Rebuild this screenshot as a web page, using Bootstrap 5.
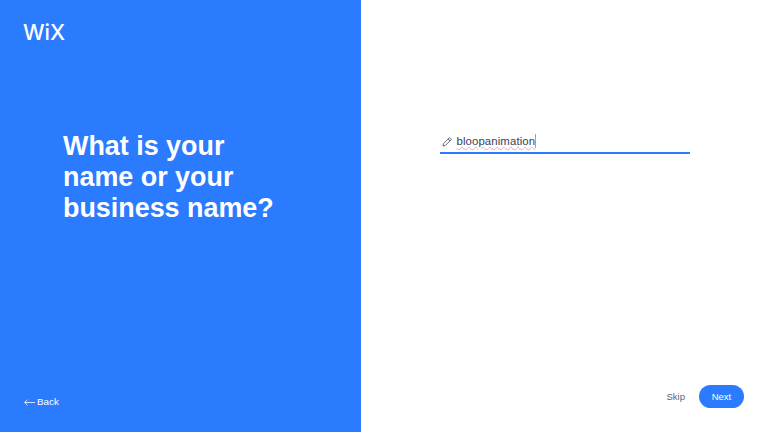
<!DOCTYPE html>
<html lang="en">
<head>
<meta charset="utf-8">
<title>Wix</title>
<link href="https://cdn.jsdelivr.net/npm/bootstrap@5.3.0/dist/css/bootstrap.min.css" rel="stylesheet">
<style>
html, body { height: 432px; overflow: hidden; }
body { font-family: "Liberation Sans", Arial, sans-serif; background: #fff; }
.wx-shell { height: 432px; }
.wx-side { width: 361px; background: #2b7bff; color: #fff; padding: 19px 24px 24px; }
.wx-logo { font-family: "Inter", sans-serif; font-size: 21.5px; line-height: 26px; font-weight: 500; letter-spacing: 0; color: #fff; margin-left: -1px; }
.wx-title { font-size: 26.9px; line-height: 31px; font-weight: 700; margin: 86px 0 0 39px; }
.wx-back { color: #fff; font-size: 9.8px; line-height: 12px; text-decoration: none; gap: 2px; }
.wx-main { padding: 131px 24px 24px 78.500px; }
.wx-field { width: 250px; height: 23px; border-bottom: 2px solid #2b7bff; padding-left: 2px; gap: 5px; }
.wx-input { font-size: 11.4px; line-height: 18px; color: #3b4057; letter-spacing: 0.1px; text-decoration: underline wavy #f3a9a6 1px; text-underline-offset: 1px; margin-top: -2px; }
.wx-caret { width: 1px; height: 14px; background: #7fa8ee; margin: -2px 0 0 -5px; }
.wx-skip { font-size: 9.5px; color: #5f6270; text-decoration: none; margin-top: 1px; }
.wx-next { width: 45px; height: 23px; padding: 1px 0 0; border: 0; font-size: 9.5px; background: #2b7bff; color: #fff; border-radius: 12px; }
.wx-next:hover { background: #2b7bff; color: #fff; }
.wx-actions { gap: 14px; }
</style>
</head>
<body>
<div class="d-flex wx-shell">
  <aside class="wx-side d-flex flex-column flex-shrink-0">
    <div class="wx-logo">WiX</div>
    <h1 class="wx-title">What is your<br>name or your<br>business name?</h1>
    <a href="#" class="wx-back d-flex align-items-center mt-auto">
      <svg width="11" height="7" viewBox="0 0 11 7" fill="none" stroke="#fff" stroke-width=".8"><path d="M11 3.500H.7M3.600.6.7 3.500l2.900 2.900"/></svg>
      <span>Back</span>
    </a>
  </aside>
  <main class="wx-main flex-grow-1 d-flex flex-column">
    <div class="wx-field d-flex align-items-center">
      <svg width="10" height="10" viewBox="0 0 10 10" fill="none" stroke="#555a6b" stroke-width=".9"><path d="M1 9l.5-2.400L7 1.100a1 1 0 0 1 1.400 0l.5.5a1 1 0 0 1 0 1.400L3.400 8.500z"/><path d="M6 2l2 2"/></svg>
      <span class="wx-input">bloopanimation</span><span class="wx-caret"></span>
    </div>
    <div class="wx-actions d-flex justify-content-end align-items-center mt-auto">
      <a href="#" class="wx-skip">Skip</a>
      <button type="button" class="btn wx-next">Next</button>
    </div>
  </main>
</div>
<script src="https://cdn.jsdelivr.net/npm/bootstrap@5.3.0/dist/js/bootstrap.bundle.min.js"></script>
</body>
</html>
